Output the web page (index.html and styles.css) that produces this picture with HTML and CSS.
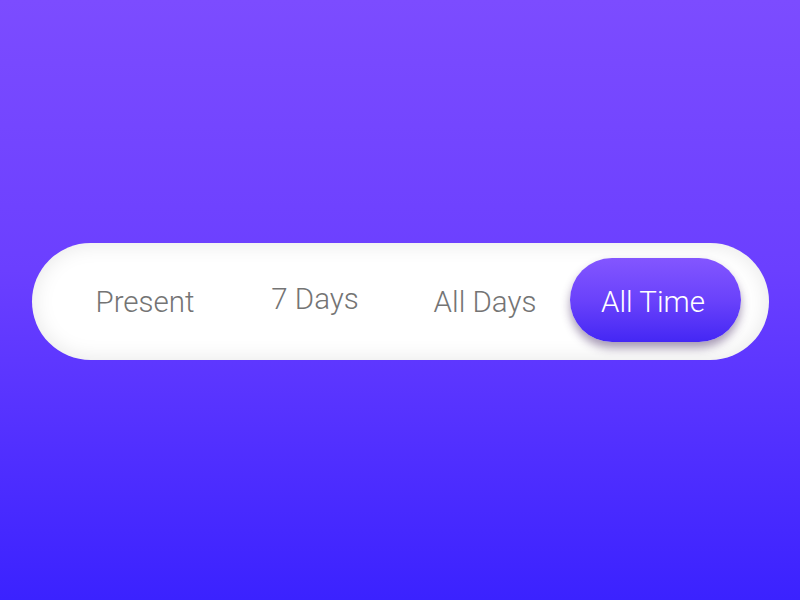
FILE: index.html
```html
<!DOCTYPE html>
<html>
<head>
<meta charset="utf-8">
<link rel="stylesheet" href="styles.css">
</head>
<body>
<div class="stage">
  <div class="switcher">
    <div class="tab">Present</div>
    <div class="tab tab-raised">7 Days</div>
    <div class="tab">All Days</div>
    <div class="tab tab-active">All Time</div>
  </div>
</div>
</body>
</html>
```
FILE: styles.css
```css
html, body {
  margin: 0;
  padding: 0;
}
body {
  width: 800px;
  height: 600px;
  background: linear-gradient(180deg, #7c4cff 0%, #6b3fff 45%, #3b22ff 100%);
  font-family: Roboto, "Liberation Sans", sans-serif;
  overflow: hidden;
}
.stage {
  padding-top: 243px;
  padding-left: 32px;
}
.switcher {
  width: 737px;
  height: 117px;
  box-sizing: border-box;
  padding: 15px 28px 18px 28px;
  background: #ffffff;
  border-radius: 59px;
  box-shadow: inset 0 0 22px rgba(0, 0, 0, 0.10);
  display: flex;
  align-items: stretch;
}
.tab {
  width: 170px;
  box-sizing: border-box;
  padding-top: 3px;
  display: flex;
  align-items: center;
  justify-content: center;
  font-weight: 300;
  font-size: 29.5px;
  color: #747474;
}
.tab-raised {
  padding-top: 0;
  padding-bottom: 3px;
}
.tab-active {
  width: 171px;
  padding-top: 3px;
  padding-right: 5px;
  border-radius: 42px;
  color: #ffffff;
  background: linear-gradient(180deg, #8356ff 0%, #6a42fb 50%, #4427f4 100%);
  box-shadow: 0 6px 10px rgba(60, 30, 90, 0.45);
}
```
